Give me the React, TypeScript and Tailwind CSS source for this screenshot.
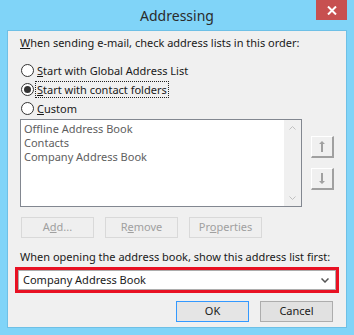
import type { ReactElement } from "react";

const LIST_ITEMS = ["Offline Address Book", "Contacts", "Company Address Book"];

function Radio({ checked, label, accel, focused }: { checked?: boolean; label: string; accel: number; focused?: boolean }): ReactElement {
  return (
    <div className="flex h-[19px] items-center">
      <div className="ml-[1px] flex h-[13px] w-[13px] items-center justify-center rounded-full border border-[#333] bg-white">
        {checked && <div className="h-[7px] w-[7px] rounded-full bg-[#333]" />}
      </div>
      <span
        className={
          focused
            ? "ml-[1px] border border-dotted border-[#222] px-[1px] leading-[15px]"
            : "ml-[3px] leading-[15px]"
        }
      >
        {label.slice(0, accel)}
        <u>{label[accel]}</u>
        {label.slice(accel + 1)}
      </span>
    </div>
  );
}

function ArrowButton({ up }: { up?: boolean }): ReactElement {
  return (
    <div className="flex h-[22px] w-[23px] items-center justify-center border-t border-l border-t-white border-l-white border-r-[2px] border-b-[2px] border-r-[#a0a0a0] border-b-[#a0a0a0] bg-[#f0f0f0]">
      <svg width="6" height="11" viewBox="0 0 6 11">
        {up ? (
          <path d="M3 0 L6 3 L4 3 L4 11 L2 11 L2 3 L0 3 Z" fill="#a0a0a0" />
        ) : (
          <path d="M3 11 L6 8 L4 8 L4 0 L2 0 L2 8 L0 8 Z" fill="#a0a0a0" />
        )}
      </svg>
    </div>
  );
}

function DisabledButton({ pre, accel, post }: { pre: string; accel: string; post: string }): ReactElement {
  return (
    <div className="flex h-[21px] w-[73px] items-center justify-center border border-[#d9d9d9] bg-[#efefef] text-[#a0a0a0]">
      <span>
        {pre}
        <u>{accel}</u>
        {post}
      </span>
    </div>
  );
}

export default function App(): ReactElement {
  return (
    <div className="flex h-[335px] w-[354px] flex-col bg-[#80d4f8] font-['Noto_Sans',sans-serif] text-[11px] text-[#1a1a1a]">
      {/* title bar */}
      <div className="relative flex h-[30px] items-center justify-center">
        <span className="text-[14px] text-[#2b2b2b]">Addressing</span>
        <div className="absolute right-[7px] top-0 flex h-[20px] w-[31px] items-center justify-center bg-[#c75050]">
          <svg width="10" height="9" viewBox="0 0 10 9">
            <path d="M1 0.5 L9 8.5 M9 0.5 L1 8.5" stroke="white" strokeWidth="2" />
          </svg>
        </div>
      </div>

      {/* client area */}
      <div className="mx-[7px] mb-[7px] flex flex-1 flex-col border border-[#6ec0e6] bg-[#f0f0f0] pl-[12px]">
        <div className="mt-[4px] h-[16px] leading-[16px]">
          <u>W</u>hen sending e-mail, check address lists in this order:
        </div>

        <div className="mt-[10px] flex flex-col">
          <Radio label="Start with Global Address List" accel={0} />
          <Radio label="Start with contact folders" accel={0} checked focused />
          <Radio label="Custom" accel={0} />
        </div>

        <div className="mt-[1px] flex">
          <div className="flex h-[88px] w-[282px] border border-[#828790] bg-white">
            <div className="flex flex-1 flex-col pl-[3px] pt-[2px] text-[#5e5e5e]">
              {LIST_ITEMS.map((item) => (
                <div key={item} className="h-[14px] leading-[14px]">
                  {item}
                </div>
              ))}
            </div>
            <div className="flex w-[17px] flex-col items-center justify-between bg-[#f0f0f0] py-[6px]">
              <svg width="7" height="4" viewBox="0 0 7 4">
                <path d="M0.5 3.5 L3.5 0.5 L6.5 3.5" stroke="#c0c0c0" fill="none" />
              </svg>
              <svg width="7" height="4" viewBox="0 0 7 4">
                <path d="M0.5 0.5 L3.5 3.5 L6.5 0.5" stroke="#c0c0c0" fill="none" />
              </svg>
            </div>
          </div>
          <div className="ml-[9px] flex flex-col pt-[17px]">
            <ArrowButton up />
            <div className="mt-[10px]">
              <ArrowButton />
            </div>
          </div>
        </div>

        <div className="mt-[10px] flex gap-[11px] pl-[1px]">
          <DisabledButton pre="A" accel="d" post="d..." />
          <DisabledButton pre="R" accel="e" post="move" />
          <DisabledButton pre="Pr" accel="o" post="perties" />
        </div>

        <div className="mt-[11px] h-[16px] whitespace-nowrap leading-[16px]">
          When opening the address book, show this address list first:
        </div>

        <div className="ml-[-5px] mt-[2px] w-[324px] border-[3px] border-[#e81123]">
          <div className="flex h-[20px] items-center justify-between border border-[#adadad] bg-white pl-[4px] pr-[6px]">
            <span>Company Address Book</span>
            <svg width="8" height="5" viewBox="0 0 8 5">
              <path d="M0.5 0.5 L4 4 L7.5 0.5" stroke="#555" strokeWidth="1.5" fill="none" />
            </svg>
          </div>
        </div>

        <div className="mt-[8px] flex justify-end gap-[11px] pr-[13px]">
          <div className="flex h-[21px] w-[73px] items-center justify-center border border-[#3399ff] bg-[#e5e5e5]">
            OK
          </div>
          <div className="flex h-[21px] w-[73px] items-center justify-center border border-[#adadad] bg-[#e1e1e1]">
            Cancel
          </div>
        </div>
      </div>
    </div>
  );
}
